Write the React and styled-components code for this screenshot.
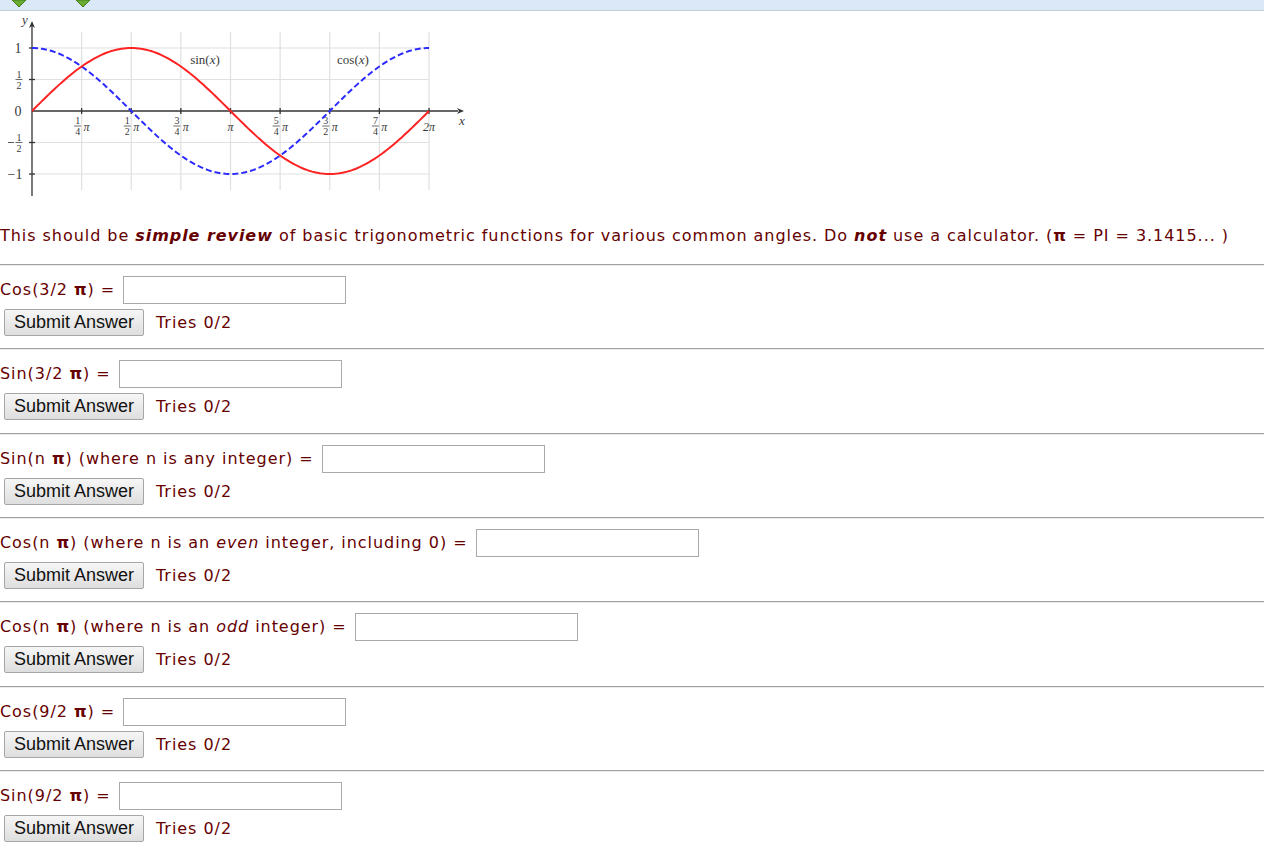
import React from 'react';
import styled, { createGlobalStyle } from 'styled-components';

const GlobalStyle = createGlobalStyle`
    body {
        margin: 0;
        background: #fff;
        font-family: 'DejaVu Sans', Verdana, sans-serif;
        font-size: 16px;
        color: #600;
    }
`;

const X0 = 32;
const XPI = 198.5;
const Y0 = 111;
const AMP = 63;

const px = (t) => X0 + (t / Math.PI) * XPI;
const py = (v) => Y0 - v * AMP;

function curve(fn) {
    const pts = [];
    for (let i = 0; i <= 160; i++) {
        const t = (i / 160) * 2 * Math.PI;
        pts.push(`${i === 0 ? 'M' : 'L'}${px(t).toFixed(2)},${py(fn(t)).toFixed(2)}`);
    }
    return pts.join(' ');
}

const questions = [
    { label: <>Cos(3/2 <b>π</b>)</> },
    { label: <>Sin(3/2 <b>π</b>)</> },
    { label: <>Sin(n <b>π</b>) (where n is any integer)</> },
    { label: <>Cos(n <b>π</b>) (where n is an <i>even</i> integer, including 0)</> },
    { label: <>Cos(n <b>π</b>) (where n is an <i>odd</i> integer)</> },
    { label: <>Cos(9/2 <b>π</b>)</> },
    { label: <>Sin(9/2 <b>π</b>)</> },
];

const xTicks = [
    { n: '1', d: '4' },
    { n: '1', d: '2' },
    { n: '3', d: '4' },
    { pi: 'π' },
    { n: '5', d: '4' },
    { n: '3', d: '2' },
    { n: '7', d: '4' },
    { pi: '2π' },
];

function Frac({ x, y, n, d, neg }) {
    return (
        <g>
            {neg && <line x1={x - 11} y1={y} x2={x - 5} y2={y} stroke="#444" strokeWidth="0.9" />}
            <text x={x} y={y - 2} textAnchor="middle" fontSize="10">{n}</text>
            <line x1={x - 3.5} y1={y} x2={x + 3.5} y2={y} stroke="#444" strokeWidth="0.8" />
            <text x={x} y={y + 9} textAnchor="middle" fontSize="10">{d}</text>
        </g>
    );
}

function Graph() {
    const quarters = [1, 2, 3, 4, 5, 6, 7, 8].map((k) => X0 + (k * XPI) / 4);
    return (
        <GraphSvg viewBox="0 11 480 200" width="480" height="200">
            <g stroke="#e0e0e0" strokeWidth="1.2">
                {quarters.map((x) => (
                    <line key={x} x1={x} y1="32" x2={x} y2="190" />
                ))}
                {[1, 0.5, -0.5, -1].map((v) => (
                    <line key={v} x1={X0} y1={py(v)} x2={px(2 * Math.PI)} y2={py(v)} />
                ))}
            </g>
            <g stroke="#333" strokeWidth="1.3">
                <line x1={X0} y1="196" x2={X0} y2="25" />
                <line x1={X0} y1={Y0} x2="458" y2={Y0} />
                {quarters.map((x) => (
                    <line key={x} x1={x} y1={Y0 - 3} x2={x} y2={Y0 + 3} />
                ))}
                {[1, 0.5, -0.5, -1].map((v) => (
                    <line key={v} x1={X0 - 3} y1={py(v)} x2={X0 + 3} y2={py(v)} />
                ))}
            </g>
            <path d="M32,21 L29,28 L32,26 L35,28 Z" fill="#333" />
            <path d="M464,111 L457,108 L459,111 L457,114 Z" fill="#333" />
            <g fill="#3a3a3a" fontFamily="'Liberation Serif', 'DejaVu Serif', serif">
                <text x="25" y="24" fontSize="13" fontStyle="italic" textAnchor="middle">y</text>
                <text x="459" y="125" fontSize="13" fontStyle="italic">x</text>
                <text x="18" y="53" fontSize="14" textAnchor="middle">1</text>
                <Frac x={19} y={79.5} n="1" d="2" />
                <text x="18" y="116" fontSize="14" textAnchor="middle">0</text>
                <Frac x={19} y={142.5} n="1" d="2" neg />
                <text x="15" y="179" fontSize="14" textAnchor="middle">−1</text>
                {xTicks.map((t, i) => {
                    const x = quarters[i];
                    if (t.pi) {
                        return (
                            <text key={i} x={x} y="131" fontSize="12" fontStyle="italic" textAnchor="middle">
                                {t.pi}
                            </text>
                        );
                    }
                    return (
                        <g key={i}>
                            <Frac x={x - 4} y={126} n={t.n} d={t.d} />
                            <text x={x + 5} y="131" fontSize="12" fontStyle="italic" textAnchor="middle">π</text>
                        </g>
                    );
                })}
                <text x="205" y="64" fontSize="13" textAnchor="middle">
                    sin(<tspan fontStyle="italic">x</tspan>)
                </text>
                <text x="353" y="64" fontSize="13" textAnchor="middle">
                    cos(<tspan fontStyle="italic">x</tspan>)
                </text>
            </g>
            <path d={curve(Math.cos)} fill="none" stroke="#2b2bff" strokeWidth="2" strokeDasharray="6 3" />
            <path d={curve(Math.sin)} fill="none" stroke="#ff2222" strokeWidth="2" />
        </GraphSvg>
    );
}

function Question({ label }) {
    return (
        <Block>
            <Rule />
            <QuestionLine>
                {label} = <AnswerInput type="text" />
            </QuestionLine>
            <SubmitRow>
                <SubmitButton type="button">Submit Answer</SubmitButton>
                <Tries>Tries 0/2</Tries>
            </SubmitRow>
        </Block>
    );
}

function App() {
    return (
        <>
            <GlobalStyle />
            <TopBar>
                <Arrow viewBox="0 0 16 10" style={{ left: 11 }}>
                    <path d="M1,0 L15,0 L8,7 Z" fill="#6aab34" stroke="#3f7d1c" strokeWidth="1" />
                </Arrow>
                <Arrow viewBox="0 0 16 10" style={{ left: 75 }}>
                    <path d="M1,0 L15,0 L8,7 Z" fill="#6aab34" stroke="#3f7d1c" strokeWidth="1" />
                </Arrow>
            </TopBar>
            <Graph />
            <Intro>
                This should be <b><i>simple review</i></b> of basic trigonometric functions for various common
                angles. Do <b><i>not</i></b> use a calculator. (<b>π</b> = PI = 3.1415... )
            </Intro>
            {questions.map((q, i) => (
                <Question key={i} label={q.label} />
            ))}
        </>
    );
}

const TopBar = styled.div`
    position: relative;
    height: 10px;
    background: #dbe8f8;
    border-bottom: 1px solid #c4ccd6;
`;

const Arrow = styled.svg`
    position: absolute;
    top: 0;
    width: 16px;
    height: 10px;
`;

const GraphSvg = styled.svg`
    display: block;
`;

const Intro = styled.p`
    margin: 15px 0 19px;
    line-height: 19px;
    white-space: nowrap;
    letter-spacing: 0.95px;
`;

const Block = styled.div`
    padding-bottom: 12.33px;
`;

const Rule = styled.div`
    height: 0;
    border-top: 1px solid #a0a0a0;
    border-bottom: 1px solid #ececec;
    margin-bottom: 10px;
`;

const QuestionLine = styled.div`
    height: 28px;
    line-height: 28px;
    white-space: nowrap;
    letter-spacing: 0.95px;
`;

const AnswerInput = styled.input`
    box-sizing: border-box;
    width: 223px;
    height: 28px;
    margin: 0 0 0 2px;
    padding: 2px 4px;
    border: 1px solid #a9a9a9;
    vertical-align: top;
    font-size: 16px;
    letter-spacing: normal;
`;

const SubmitRow = styled.div`
    display: flex;
    align-items: center;
    margin-top: 5px;
    padding-left: 4px;
    gap: 12px;
`;

const SubmitButton = styled.button`
    box-sizing: border-box;
    width: 140px;
    height: 27px;
    padding: 0 6px;
    font-family: 'Liberation Sans', Arial, sans-serif;
    font-size: 18px;
    color: #111;
    background: linear-gradient(#f6f6f6, #dedede);
    border: 1px solid #a6a6a6;
    border-radius: 2px;
`;

const Tries = styled.span`
    line-height: 27px;
    letter-spacing: 0.95px;
`;

export default App;
